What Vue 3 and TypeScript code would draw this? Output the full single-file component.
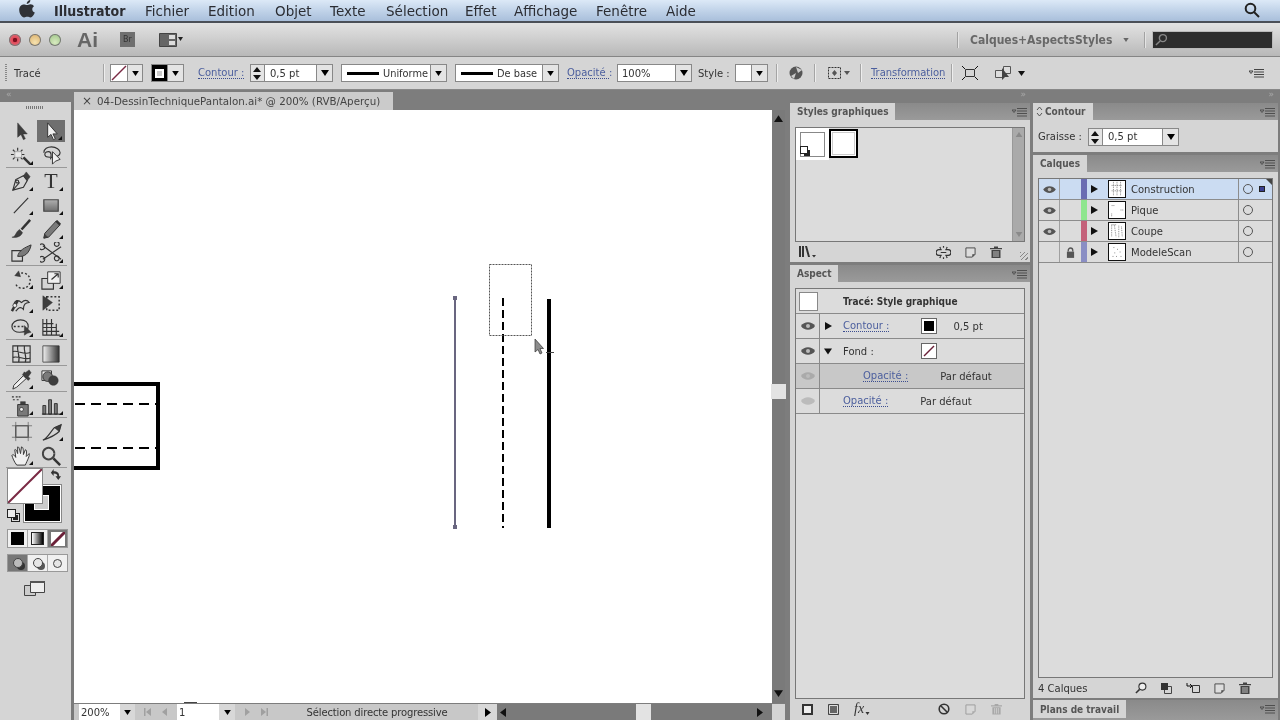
<script setup lang="ts">
interface Shape { d: string; c?: string }
interface Tool { icon: Shape[]; text?: string; flyout?: boolean; active?: boolean }

const menus = [
  { label: 'Fichier', width: 63 },
  { label: 'Edition', width: 67 },
  { label: 'Objet', width: 55 },
  { label: 'Texte', width: 56 },
  { label: 'Sélection', width: 79 },
  { label: 'Effet', width: 49 },
  { label: 'Affichage', width: 82 },
  { label: 'Fenêtre', width: 70 },
  { label: 'Aide', width: 40 },
]

const t = (icon: Shape[], flyout = true, extra: Partial<Tool> = {}): Tool => ({ icon, flyout, ...extra })

const toolGroups: Tool[][] = [
  [
    t([{ d: 'M8 3V18L11.5 15L14 20.5L16 19.5L13.5 14.5H18Z', c: 'dark' }], false),
    t([{ d: 'M8 3V18L11.5 15L14 20.5L16 19.5L13.5 14.5H18Z', c: 'white' }], true, { active: true }),
    t([{ d: 'M14 14L21 21', c: 'thick' }, { d: 'M8 4V7M8 15V18M1 11H4M12 11H15M3 6L5 8M11 14L13 16M13 6L11 8M5 14L3 16', c: 'line' }, { d: 'M5 8H12V14H5Z', c: 'pale' }]),
    t([{ d: 'M4 9C4 5 8 3 12 3C17 3 21 6 21 9C21 12 17 14 13 14C9 14 7 14 6 13C4 11 5 8 9 8C12 8 12 12 11 16', c: 'line' }, { d: 'M13 8V21L16 18L21 16Z', c: 'white' }], false),
  ],
  [
    t([{ d: 'M3 21L6 10L14 6L18 11L14 18Z', c: 'open' }, { d: 'M3 21L10 13', c: 'line' }, { d: 'M14 6L17 2L21 7L18 11Z', c: 'dark' }, { d: 'M9 12A1.5 1.5 0 1 0 9 12.1', c: 'line' }]),
    t([], true, { text: 'T' }),
    t([{ d: 'M4 20L19 4', c: 'line' }]),
    t([{ d: 'M4 6H19V18H4Z', c: 'grad' }]),
    t([{ d: 'M12 12L21 2', c: 'thick' }, { d: 'M2 20C6 20 6 14 10 12L13 15C12 19 7 21 2 20Z', c: 'dark' }], false),
    t([{ d: 'M5 16L17 3L21 7L9 20L4 21Z', c: 'mid' }, { d: 'M17 3L21 7', c: 'thick' }, { d: 'M4 21L5 17L8 20Z', c: 'dark' }]),
    t([{ d: 'M2 9H13V20H2Z', c: 'open' }, { d: 'M8 15C9 9 15 6 22 3C21 9 17 15 11 15Z', c: 'mid' }], false),
    t([{ d: 'M3 4L22 18M3 18L22 5', c: 'line' }, { d: 'M5 5A3 3 0 1 0 5 5.1M5 18A3 3 0 1 0 5 18.1', c: 'line' }, { d: 'M20 2A2.5 2.5 0 1 0 20 2.1M20 17A2.5 2.5 0 1 0 20 17.1', c: 'line' }]),
  ],
  [
    t([{ d: 'M8 7A8 8 0 1 1 6 17', c: 'dots' }, { d: 'M9 3L5 8L11 9Z', c: 'dark' }]),
    t([{ d: 'M2 11H14V22H2Z', c: 'open' }, { d: 'M8 4H21V16H8Z', c: 'wopen' }, { d: 'M12 12L19 6M15 6H19V10', c: 'line' }]),
    t([{ d: 'M4 15C4 8 9 8 12 11C15 8 18 8 20 11C16 11 14 14 14 18C10 14 8 18 6 20', c: 'line' }, { d: 'M8 9L2 20', c: 'thick' }, { d: 'M7 14A2 2 0 1 0 7 14.1', c: 'white' }]),
    t([{ d: 'M7 5H20V19H7Z', c: 'dots' }, { d: 'M3 4L13 11L3 19Z', c: 'dark' }], false),
    t([{ d: 'M2 11C2 7 6 4 11 4C16 4 19 7 19 11C19 15 15 17 10 17C6 17 2 15 2 11Z', c: 'line' }, { d: 'M4 11H15', c: 'dots' }, { d: 'M15 10V20L18 18L22 17Z', c: 'dark' }]),
    t([{ d: 'M3 3V20H21M3 16H20M3 12H17M3 8H14M7 3V20M12 3V20M17 8V20', c: 'line' }]),
  ],
  [
    t([{ d: 'M3 4H21V21H3Z', c: 'open' }, { d: 'M3 10C8 8 14 14 21 11M3 16C9 14 14 19 21 17M8 4C7 10 11 15 9 21M15 4C14 10 18 15 16 21', c: 'line' }], false),
    t([{ d: 'M3 4H20V21H3Z', c: 'hgrad' }], false),
  ],
  [
    t([{ d: 'M3 22L4 18L14 8L17 11L7 20Z', c: 'wopen' }, { d: 'M13 7L19 13L21 11L19 9L22 5L20 2L16 5L15 4Z', c: 'dark' }]),
    t([{ d: 'M2 3H12V13H2Z', c: 'wopen' }, { d: 'M13 9A5 5 0 1 0 13 9.1', c: 'mid' }, { d: 'M19 13A5 5 0 1 0 19 13.1', c: 'dark' }], false),
  ],
  [
    t([{ d: 'M8 11H19V23H8Z', c: 'mid' }, { d: 'M11 8H16V11H11Z', c: 'dark' }, { d: 'M2 3H4M6 3H8M9 3H11M3 6H5M7 6H9', c: 'line' }, { d: 'M14 16A2 2 0 1 0 14 16.1', c: 'wopen' }]),
    t([{ d: 'M3 12H6V21H3ZM9 6H12V21H9ZM15 10H18V21H15Z', c: 'mid' }, { d: 'M2 21H22', c: 'line' }]),
  ],
  [
    t([{ d: 'M6 6H19V18H6Z', c: 'open' }, { d: 'M2 6H23M2 18H23M6 2V22M19 2V22', c: 'hair' }], false),
    t([{ d: 'M3 21C8 19 11 12 15 8L22 5L20 12C16 16 9 19 3 21Z', c: 'open' }, { d: 'M15 8L22 5L20 12Z', c: 'dark' }]),
    t([{ d: 'M7 22C4 18 3 15 2 12C3 10 5 12 6 14L5 6C7 5 7 8 8 10L8 3C10 3 10 7 11 10L12 3C14 3 14 7 14 11L16 6C18 6 17 10 17 13L20 10C21 12 18 17 16 22Z', c: 'wopen' }]),
    t([{ d: 'M15 10A6 6 0 1 0 15 10.1', c: 'circle' }, { d: 'M14 15L21 22', c: 'thick' }], false),
  ],
]

const panelRows = [
  { color: '#6a6cb2', selected: true, eye: true, name: 'Construction', thumb: 'M5 1V17M9 1V17M13 1V17M3 5H15M3 11H15' },
  { color: '#8ee68e', eye: true, name: 'Pique', thumb: 'M3 4H7M3 13V16M13 9H17' },
  { color: '#c4617a', eye: true, name: 'Coupe', thumb: 'M3 2V16M6 2L8 16M11 3V16M14 4L15 16M3 2H9' },
  { color: '#8a8ec4', lock: true, name: 'ModeleScan', thumb: 'M5 4H6M9 6H10M12 9H13M6 10H7M8 14H9M13 14H14M4 14H5' },
]
</script>

<template>
  <div class="app">
    <svg class="defs" width="0" height="0">
      <defs>
        <linearGradient id="gv" x1="0" y1="0" x2="0" y2="1"><stop offset="0" stop-color="#b0b0b0" /><stop offset="1" stop-color="#6e6e6e" /></linearGradient>
        <linearGradient id="gh" x1="0" y1="0" x2="1" y2="0"><stop offset="0" stop-color="#f2f2f2" /><stop offset="1" stop-color="#333" /></linearGradient>
      </defs>
      <symbol id="drop" viewBox="0 0 8 6"><path d="M0 0H8L4 6Z" /></symbol>
      <symbol id="menu" viewBox="0 0 15 10">
        <path class="m" d="M5 1.5H15M5 4H15M5 6.5H15M5 9H15M0 3H4L2 5.5Z" />
      </symbol>
      <symbol id="eye" viewBox="0 0 14 10">
        <path d="M0 5C3 0 11 0 14 5C11 10 3 10 0 5Z" />
        <circle cx="7" cy="5" r="2" fill="#bbb" />
      </symbol>
      <symbol id="page" viewBox="0 0 12 12">
        <path class="icon-open" d="M1 1H11V8L8 11H1Z" />
        <path d="M8 11V8H11Z" />
      </symbol>
      <symbol id="trash" viewBox="0 0 12 12">
        <path d="M0 2H12V3.2H0ZM4 .5H8V2H4ZM1.5 4H10.5V12H1.5Z" />
        <path stroke="#ddd" stroke-width=".8" d="M4 5V11M6 5V11M8 5V11" />
      </symbol>
    </svg>

    <header class="menubar">
      <svg class="apple" viewBox="0 0 16 18" width="16" height="18">
        <path d="M11.4 0C11.5 2.2 9.6 4 7.7 3.9C7.6 1.9 9.500 .1 11.4 0ZM8 5C9 5 10 4.200 11.500 4.200C13 4.200 14.300 5 15 6.200C12.400 7.700 12.800 11.500 15.800 12.600C15 14.800 13.300 17.500 11.500 17.500C10.300 17.500 9.700 16.800 8.300 16.800C6.900 16.800 6.300 17.500 5.100 17.500C2.800 17.500 .2 13.500 .2 10C.2 6.500 2.400 4.400 4.800 4.400C6.100 4.400 7.100 5 8 5Z" />
      </svg>
      <span class="menu-app">Illustrator</span>
      <span v-for="m in menus" :key="m.label" class="menu-item" :style="{ width: m.width + 'px' }">{{ m.label }}</span>
      <svg class="spot" viewBox="0 0 16 16" width="16" height="16">
        <circle cx="6.500" cy="6.500" r="4.800" />
        <path d="M10 10L15 15" />
      </svg>
    </header>

    <section class="appbar">
      <div class="lights">
        <i class="light red"></i><i class="light amber"></i><i class="light green"></i>
      </div>
      <span class="ai">Ai</span>
      <span class="br">Br</span>
      <svg class="arrange" viewBox="0 0 24 14" width="24" height="14">
        <path fill="#666" stroke="#444" d="M.5 .5H17.500V13.500H.5Z" />
        <path fill="#ddd" d="M10 2H16V6H10ZM10 8H16V12H10Z" />
        <path fill="#222" d="M19 4H24L21.500 8Z" />
      </svg>
      <div class="spacer"></div>
      <i class="vsep"></i>
      <span class="workspace">Calques+AspectsStyles</span>
      <svg class="ws-caret" width="6" height="4"><use href="#drop" fill="#666" /></svg>
      <i class="vsep"></i>
      <div class="search">
        <svg viewBox="0 0 14 14" width="13" height="13">
          <circle cx="8.500" cy="5.500" r="3.800" />
          <path d="M5.500 8.500L1 13" />
        </svg>
      </div>
    </section>

    <section class="controlbar">
      <i class="grip"></i>
      <span class="ctl-title">Tracé</span>
      <i class="ctl-sep first"></i>
      <div class="combo swatch-combo">
        <span class="sw"><svg viewBox="0 0 16 16" width="16" height="16"><path class="none-line" d="M1 15L15 1" /></svg></span>
        <span class="dd"><svg width="7" height="5"><use href="#drop" /></svg></span>
      </div>
      <div class="combo swatch-combo">
        <span class="sw black"><i></i></span>
        <span class="dd"><svg width="7" height="5"><use href="#drop" /></svg></span>
      </div>
      <span class="link contour">Contour :</span>
      <div class="combo weight">
        <span class="spin"><svg viewBox="0 0 12 17" width="12" height="17"><path d="M2 7L6 2L10 7ZM2 10H10L6 15Z" /></svg></span>
        <span class="val">0,5 pt</span>
        <span class="dd"><svg width="8" height="6"><use href="#drop" /></svg></span>
      </div>
      <div class="combo profile w106">
        <i class="stroke-sample"></i><span class="val">Uniforme</span>
        <span class="dd"><svg width="7" height="5"><use href="#drop" /></svg></span>
      </div>
      <div class="combo profile w104">
        <i class="stroke-sample"></i><span class="val">De base</span>
        <span class="dd"><svg width="7" height="5"><use href="#drop" /></svg></span>
      </div>
      <span class="link opacity">Opacité :</span>
      <div class="combo percent">
        <span class="val">100%</span>
        <span class="dd"><svg width="8" height="6"><use href="#drop" /></svg></span>
      </div>
      <span class="style-label">Style :</span>
      <div class="combo swatch-combo style-swatch">
        <span class="sw"></span>
        <span class="dd"><svg width="7" height="5"><use href="#drop" /></svg></span>
      </div>
      <i class="ctl-sep"></i>
      <svg class="globe" viewBox="0 0 14 14" width="14" height="14">
        <circle cx="7" cy="7" r="6.500" fill="#555" />
        <path fill="#ccc" d="M7 1L9 7L13 4ZM2 10L7 7L5 13Z" />
      </svg>
      <i class="ctl-sep"></i>
      <svg class="align" viewBox="0 0 24 14" width="24" height="14">
        <path fill="none" stroke="#333" stroke-dasharray="2 1" d="M1.500 1.500H13.500V12.500H1.500Z" />
        <path fill="#555" d="M5 7L7.500 4L10 7L7.500 10ZM17 5H23L20 9Z" />
      </svg>
      <i class="ctl-sep"></i>
      <span class="link transform">Transformation</span>
      <i class="ctl-sep"></i>
      <svg class="isolate" viewBox="0 0 16 14" width="16" height="14">
        <path fill="none" stroke="#333" d="M3.500 3.500H12.500V10.500H3.500Z" />
        <path fill="none" stroke="#111" d="M0 0L3 3M16 0L13 3M0 14L3 11M16 14L13 11" />
      </svg>
      <svg class="arrange-ic" viewBox="0 0 30 14" width="30" height="14">
        <path fill="#ddd" stroke="#555" d="M.5 4.500H7.500V11.500H.5ZM8.500 .5H15.500V7.500H8.500Z" />
        <path fill="#444" d="M7 2V14L10 11L14 11Z" />
        <path fill="#111" d="M23 5H30L26.500 10Z" />
      </svg>
      <div class="spacer"></div>
      <svg class="ctl-menu" width="15" height="10"><use href="#menu" /></svg>
    </section>

    <main class="workspace-area">
      <aside class="toolbox">
        <div class="strip"><span class="chev">«</span></div>
        <i class="tool-grip"></i>
        <div v-for="(group, gi) in toolGroups" :key="gi" class="tool-group">
          <div v-for="(tool, ti) in group" :key="ti" class="tool" :class="{ active: tool.active, fly: tool.flyout }">
            <span v-if="tool.text" class="tool-text">{{ tool.text }}</span>
            <svg v-else viewBox="0 0 24 24" width="23" height="23">
              <path v-for="(s, si) in tool.icon" :key="si" :d="s.d" :class="s.c" />
            </svg>
          </div>
        </div>

        <div class="fillstroke">
          <svg class="swap" viewBox="0 0 14 14" width="13" height="13">
            <path d="M2 5L5 1V3.500C9 3.500 11 5 11 9H13L10 13L7 9H9C9 7 8 6 5 6V8.500Z" />
          </svg>
          <div class="stroke-box"><i></i></div>
          <div class="fill-box">
            <svg viewBox="0 0 34 34" width="34" height="34"><path d="M0 34L34 0" /></svg>
          </div>
          <div class="defaults"><i></i><i></i></div>
        </div>

        <div class="mode-row">
          <span class="cell"><i class="solid"></i></span>
          <span class="cell"><i class="gradient"></i></span>
          <span class="cell on"><svg viewBox="0 0 14 14" width="14" height="14"><path fill="#fff" d="M0 0H14V14H0Z" /><path stroke="#6b2038" stroke-width="3" d="M0 14L14 0" /></svg></span>
        </div>
        <div class="mode-row draw">
          <span class="cell on"><i class="dm one"></i></span>
          <span class="cell"><i class="dm two"></i></span>
          <span class="cell"><i class="dm three"></i></span>
        </div>
        <svg class="screen" viewBox="0 0 22 17" width="22" height="17">
          <path fill="#ccc" stroke="#444" d="M.5 5.500H11.500V15.500H.5Z" />
          <path fill="#eee" stroke="#444" d="M6.500 1.500H20.500V12.500H6.500Z" />
          <path fill="#555" d="M6 1H21V3H6Z" />
        </svg>
      </aside>

      <section class="document">
        <div class="tabrow">
          <div class="tab"><span class="tab-x">×</span>04-DessinTechniquePantalon.ai* @ 200% (RVB/Aperçu)</div>
        </div>
        <div class="doc-main">
          <div class="canvas">
            <svg class="art" viewBox="74 110 698 593" width="698" height="593">
              <path class="art-rect" d="M60 384H158V468H60" />
              <path class="art-dash1" d="M75 404H158M75 448H158" />
              <path class="art-purple" d="M455 298V528" />
              <path class="art-node" d="M453 296H457V300H453ZM453 525H457V529H453Z" />
              <path class="art-dash2" d="M503 298V528" />
              <path class="art-thick" d="M549 299V528" />
              <path class="art-dot" d="M489.500 264.500H531.500V335.500H489.500Z" />
              <path class="art-tick" d="M546 352.500H554" />
              <path class="art-cursor" d="M535 339V352L538 349.500L540 354L542 353L540 348.500H543.500Z" />
              <path class="art-tick" d="M184 702.500H197" />
            </svg>
          </div>
          <div class="vscroll">
            <svg class="sb-up" width="9" height="7" viewBox="0 0 8 6"><path d="M0 6H8L4 0Z" /></svg>
            <i class="v-thumb"></i>
            <svg class="sb-down" width="9" height="7"><use href="#drop" /></svg>
          </div>
        </div>
        <footer class="status">
          <div class="st-field zoom"><span>200%</span></div>
          <span class="st-dd"><svg width="7" height="5"><use href="#drop" /></svg></span>
          <svg class="st-nav nav-a" viewBox="0 0 26 10" width="26" height="10"><path d="M1 1H2.500V9H1ZM8 1L3 5L8 9ZM24 1L19 5L24 9Z" /></svg>
          <div class="st-field page"><span>1</span></div>
          <span class="st-dd"><svg width="7" height="5"><use href="#drop" /></svg></span>
          <svg class="st-nav" viewBox="0 0 26 10" width="26" height="10"><path d="M2 1L7 5L2 9ZM18 1L23 5L18 9ZM23.500 1H25V9H23.500Z" /></svg>
          <span class="st-text">Sélection directe progressive</span>
          <span class="st-play"><svg width="6" height="9" viewBox="0 0 6 9"><path d="M0 0L6 4.500L0 9Z" /></svg></span>
          <div class="hscroll">
            <svg width="6" height="9" viewBox="0 0 6 9"><path d="M6 0L0 4.500L6 9Z" /></svg>
            <i class="h-thumb"></i>
            <svg width="6" height="9" viewBox="0 0 6 9"><path d="M0 0L6 4.500L0 9Z" /></svg>
          </div>
          <i class="corner"></i>
        </footer>
      </section>

      <section class="dock dock-mid">
        <div class="strip"><span class="chev right">»</span></div>
        <div class="panel styles">
          <div class="panel-head">
            <span class="panel-tab w105">Styles graphiques</span>
            <svg class="p-menu" width="15" height="10"><use href="#menu" /></svg>
          </div>
          <div class="styles-box">
            <div class="style-thumbs">
              <div class="thumb-a"><i></i><b></b></div>
              <div class="thumb-b"><i></i></div>
            </div>
            <div class="styles-sb">
              <svg width="8" height="5" viewBox="0 0 8 6"><path d="M0 6H8L4 0Z" /></svg>
              <svg width="8" height="5"><use href="#drop" /></svg>
            </div>
          </div>
          <div class="panel-foot">
            <svg class="lib" viewBox="0 0 18 12" width="18" height="12">
              <path fill="#333" d="M0 0H2V11H0ZM3 0H5V11H3ZM6 0L8 0L11 11H9ZM13 9H17L15 11.500Z" />
            </svg>
            <div class="spacer"></div>
            <svg class="foot-ic" viewBox="0 0 16 14" width="15" height="13">
              <path fill="none" stroke="#333" stroke-width="1.300" d="M6 4H3A3 3 0 0 0 3 10H6M10 4H13A3 3 0 0 1 13 10H10M5 7H11M8 0V2M8 12V14M4 1L5 3M12 1L11 3M4 13L5 11M12 13L11 11" />
            </svg>
            <svg class="foot-ic" width="11" height="11"><use href="#page" /></svg>
            <svg class="foot-ic trash" width="12" height="12"><use href="#trash" /></svg>
            <i class="resize"></i>
          </div>
        </div>
        <i class="dock-gap"></i>
        <div class="panel aspect">
          <div class="panel-head">
            <span class="panel-tab w48">Aspect</span>
            <svg class="p-menu" width="15" height="10"><use href="#menu" /></svg>
          </div>
          <div class="aspect-box">
            <div class="a-row head">
              <span class="a-thumb"><i></i></span>
              <strong>Tracé: Style graphique</strong>
            </div>
            <div class="a-row">
              <span class="a-eye"><svg width="14" height="10" fill="#555"><use href="#eye" /></svg></span>
              <span class="a-tw"><svg width="7" height="8" viewBox="0 0 7 8"><path d="M0 0L7 4L0 8Z" /></svg></span>
              <span class="link a-name">Contour :</span>
              <span class="a-sw"><i class="black"></i></span>
              <span class="a-val">0,5 pt</span>
            </div>
            <div class="a-row">
              <span class="a-eye"><svg width="14" height="10" fill="#555"><use href="#eye" /></svg></span>
              <span class="a-tw"><svg width="8" height="7"><use href="#drop" /></svg></span>
              <span class="a-name">Fond :</span>
              <span class="a-sw"><svg viewBox="0 0 12 12" width="12" height="12"><path stroke="#6b2038" stroke-width="1.500" d="M1 11L11 1" /></svg></span>
            </div>
            <div class="a-row dim sub">
              <span class="a-eye"><svg width="14" height="10" fill="#aaa"><use href="#eye" /></svg></span>
              <span class="link sub-name">Opacité :</span>
              <span class="a-def sub-def">Par défaut</span>
            </div>
            <div class="a-row">
              <span class="a-eye"><svg width="14" height="10" fill="#bbb"><use href="#eye" /></svg></span>
              <span class="link a-name2">Opacité :</span>
              <span class="a-def">Par défaut</span>
            </div>
          </div>
          <div class="aspect-foot">
            <svg width="11" height="11" viewBox="0 0 11 11"><path fill="#eee" stroke="#333" stroke-width="2" d="M1 1H10V10H1Z" /></svg>
            <svg class="gap-22" width="11" height="11" viewBox="0 0 11 11"><path fill="#666" stroke="#444" d="M.5 .5H10.500V10.500H.5Z" /><path fill="none" stroke="#ddd" d="M1.500 1.500H9.500V9.500H1.500Z" /></svg>
            <span class="fx">fx</span>
            <svg class="caret" width="5" height="3"><use href="#drop" /></svg>
            <div class="spacer"></div>
            <svg class="no" viewBox="0 0 12 12" width="12" height="12"><circle cx="6" cy="6" r="4.800" fill="none" stroke="#333" stroke-width="1.600" /><path stroke="#333" stroke-width="1.600" d="M2.500 2.500L9.500 9.500" /></svg>
            <svg class="ghost" width="11" height="11"><use href="#page" /></svg>
            <svg class="ghost" width="11" height="12"><use href="#trash" /></svg>
          </div>
        </div>
      </section>

      <section class="dock dock-right">
        <div class="strip"><span class="chev right">»</span></div>
        <div class="panel contour-panel">
          <div class="panel-head">
            <span class="panel-tab w60"><svg width="7" height="11" viewBox="0 0 7 11"><path fill="none" stroke="#555" d="M1 4L3.500 1L6 4M1 7L3.500 10L6 7" /></svg>Contour</span>
            <svg class="p-menu" width="15" height="10"><use href="#menu" /></svg>
          </div>
          <div class="contour-body">
            <span class="graisse">Graisse :</span>
            <div class="combo weight small">
              <span class="spin"><svg viewBox="0 0 12 17" width="12" height="17"><path d="M2 7L6 2L10 7ZM2 10H10L6 15Z" /></svg></span>
              <span class="val">0,5 pt</span>
              <span class="dd"><svg width="8" height="6"><use href="#drop" /></svg></span>
            </div>
          </div>
        </div>
        <i class="dock-gap"></i>
        <div class="panel layers">
          <div class="panel-head">
            <span class="panel-tab w54">Calques</span>
            <svg class="p-menu" width="15" height="10"><use href="#menu" /></svg>
          </div>
          <div class="layer-box">
            <div v-for="r in panelRows" :key="r.name" class="layer" :class="{ selected: r.selected }">
              <span class="l-eye"><svg v-if="r.eye" width="13" height="9" fill="#555"><use href="#eye" /></svg></span>
              <span class="l-lock">
                <svg v-if="r.lock" viewBox="0 0 10 12" width="9" height="11"><path fill="none" stroke="#555" stroke-width="1.500" d="M2.500 5V3.500A2.500 2.500 0 0 1 7.500 3.500V5" /><path fill="#555" d="M1 5H9V12H1Z" /></svg>
              </span>
              <i class="l-color" :style="{ background: r.color }"></i>
              <span class="l-tw"><svg width="7" height="8" viewBox="0 0 7 8"><path d="M0 0L7 4L0 8Z" /></svg></span>
              <span class="l-thumb"><svg viewBox="0 0 18 18" width="16" height="16"><path :d="r.thumb" /></svg></span>
              <span class="l-name">{{ r.name }}</span>
              <span class="l-target"><i class="ring"></i><i v-if="r.selected" class="sel-sq"></i></span>
            </div>
          </div>
          <div class="layer-foot">
            <span class="layer-count">4 Calques</span>
            <div class="spacer"></div>
            <svg viewBox="0 0 13 13" width="12" height="12" class="lf"><circle cx="8" cy="5" r="3.800" fill="#eee" stroke="#333" stroke-width="1.200" /><path stroke="#333" stroke-width="1.600" d="M5 8L1 12" /></svg>
            <svg viewBox="0 0 11 11" width="11" height="11" class="lf"><path fill="none" stroke="#444" d="M3.500 3.500H10.500V10.500H3.500Z" /><path fill="#333" d="M0 0H7V7H0Z" /></svg>
            <svg viewBox="0 0 14 10" width="14" height="10" class="lf"><path fill="none" stroke="#333" d="M6.500 2.500H13.500V9.500H6.500Z" /><path fill="none" stroke="#111" d="M1 0V3H6M4 1L6 3L4 5" /></svg>
            <svg width="11" height="11" class="lf"><use href="#page" /></svg>
            <svg width="12" height="12" class="lf"><use href="#trash" /></svg>
          </div>
        </div>
        <div class="artboards">
          <span class="panel-tab plans">Plans de travail</span>
          <svg class="p-menu" width="15" height="10"><use href="#menu" /></svg>
        </div>
      </section>
    </main>
  </div>
</template>

<style>
html, body { margin: 0; overflow: hidden; background: #7d7d7d; }
</style>

<style scoped>
.app {
  width: 1280px; height: 720px; display: flex; flex-direction: column; overflow: hidden;
  font-family: "DejaVu Sans", sans-serif; font-size: 10px; color: #333; background: #7d7d7d;
  filter: blur(.3px);
}
.defs { position: absolute; }
.spacer { flex: 1; }
i { display: block; }
svg { display: block; flex: none; }
.icon-open { fill: #ddd; stroke: #444; }

/* Menu bar */
.menubar {
  height: 21px; flex: none; display: flex; align-items: center; position: relative;
  background: linear-gradient(#dce9f7, #bccfe6 60%, #a9bfdb); border-bottom: 2px solid #4a4f57;
  font-size: 14px; color: #2b2d33;
}
.apple { margin-left: 19px; fill: #2f3136; margin-top: -3px; }
.menu-app { margin-left: 19px; width: 91px; font-weight: 700; font-size: 14px; font-family: "DejaVu Sans Condensed", "DejaVu Sans", sans-serif; font-stretch: condensed; }
.menu-item { font-size: 13.500px; flex: none; white-space: nowrap; }
.spot { position: absolute; right: 20px; top: 2px; fill: none; stroke: #222; stroke-width: 2; }

/* Application bar */
.appbar {
  height: 33px; flex: none; display: flex; align-items: center;
  background: linear-gradient(#e2e2e2, #d2d2d2 40%, #b8b8b8); border-bottom: 1px solid #858585;
}
.lights { display: flex; gap: 8px; margin-left: 9px; }
.light { width: 12px; height: 12px; border-radius: 50%; box-shadow: inset 0 0 0 1px #777; }
.red { background: radial-gradient(circle, #7a1020 22%, #e04a5a 30%, #e8808a); }
.amber { background: radial-gradient(circle at 50% 70%, #f5e2b0, #d8a860); }
.green { background: radial-gradient(circle at 50% 70%, #d8eac0, #96c080); }
.ai { margin-left: 16px; font-family: "Liberation Sans", sans-serif; font-size: 21px; font-weight: 700; color: #666; width: 34px; }
.br {
  width: 15px; height: 15px; background: #6f6f6f; color: #333; font-size: 8px; text-align: center; line-height: 16px;
  margin-left: 9px;
}
.arrange { margin-left: 24px; }
.vsep { width: 1px; height: 16px; background: #a2a2a2; box-shadow: 1px 0 0 #e4e4e4; }
.workspace { margin-left: 12px; font-size: 12px; font-weight: 700; color: #686868; width: 153px; white-space: nowrap; font-family: "DejaVu Sans Condensed", "DejaVu Sans", sans-serif; font-stretch: condensed; }
.ws-caret { margin-right: 15px; }
.search {
  width: 119px; height: 16px; margin: 0 8px 0 8px; background: #2e2e2e; display: flex; align-items: center;
  box-shadow: 0 0 0 1px #bbb;
}
.search svg { margin-left: 2px; fill: none; stroke: #888; stroke-width: 1.500; }

/* Control bar */
.controlbar {
  height: 33px; flex: none; display: flex; align-items: center; background: #d5d5d5; border-bottom: 1px solid #888;
  position: relative; box-sizing: border-box; font-size: 10px;
}
.grip { width: 2px; height: 18px; margin-left: 5px; background: repeating-linear-gradient(#888 0 1px, transparent 1px 2px); }
.ctl-title { margin-left: 7px; width: 89px; }
.ctl-sep { width: 1px; height: 18px; background: #a5a5a5; box-shadow: 1px 0 0 #eee; flex: none; }
.ctl-sep.first { margin-right: 6px; }
.combo { display: flex; height: 18px; background: #fff; box-sizing: border-box; border: 1px solid #888; align-items: center; flex: none; }
.combo .dd { align-self: stretch; display: flex; align-items: center; justify-content: center; background: #e4e4e4; border-left: 1px solid #888; }
.combo .val { flex: 1; font-size: 10px; color: #333; white-space: nowrap; }
.swatch-combo { width: 33px; margin-right: 8px; }
.swatch-combo .sw { flex: 1; height: 16px; }
.swatch-combo .dd { width: 15px; }
.sw.black { background: #000; display: flex; align-items: center; justify-content: center; }
.sw.black i { width: 5px; height: 5px; border: 2px solid #fff; background: #ccc; }
.none-line { stroke: #7a2a44; stroke-width: 1.500; }
.link { color: #4c5f9e; border-bottom: 1px dotted #3b4d90; line-height: 11px; flex: none; }
.contour { margin-left: 6px; width: 46px; white-space: nowrap; margin-right: 6px; }
.weight { width: 83px; margin-right: 8px; }
.spin { width: 13px; align-self: stretch; background: #e4e4e4; border-right: 1px solid #888; margin-right: 5px; }
.spin path { fill: #111; }
.weight .dd { width: 15px; }
.profile { padding-left: 5px; margin-right: 8px; }
.w106 { width: 106px; }
.w104 { width: 104px; }
.stroke-sample { width: 32px; height: 3px; background: #000; margin-right: 4px; }
.profile .val { font-size: 9.800px; }
.profile .dd { width: 15px; flex: none; }
.opacity { width: 42px; white-space: nowrap; }
.percent { width: 75px; margin-left: 8px; padding-left: 4px; }
.percent .dd { width: 15px; }
.style-label { margin-left: 6px; width: 37px; }
.style-swatch { margin-right: 8px; }
.globe { margin: 0 11px 0 12px; }
.align { margin: 0 9px 0 12px; }
.transform { margin: 0 6px 0 10px; white-space: nowrap; letter-spacing: -.05px; }
.isolate { margin-left: 10px; }
.arrange-ic { margin-left: 17px; }
.ctl-menu { margin-right: 16px; }
.m { stroke: #444; fill: none; }

/* Work area */
.workspace-area { flex: 1; display: flex; min-height: 0; }
.strip { height: 13px; background: #7d7d7d; flex: none; position: relative; }
.chev { position: absolute; left: 6px; top: -1px; font-size: 9px; color: #aaa; }
.chev.right { left: auto; right: 4px; }

/* Toolbox */
.toolbox {
  width: 71px; flex: none; background: #d5d5d5; border-right: 3px solid #7a7a7a; position: relative;
  display: flex; flex-direction: column; align-items: stretch;
}
.toolbox .strip { height: 12px; margin-right: -3px; }
.tool-grip { height: 3px; width: 18px; margin: 4px auto 10px 26px; background: repeating-linear-gradient(90deg, #777 0 1px, transparent 1px 2px); }
.tool-group {
  display: grid; grid-template-columns: 30px 30px; grid-auto-rows: 24px; margin: 0 4px 1px 6px;
  border-bottom: 1px solid #999;
}
.tool { display: flex; align-items: center; justify-content: center; position: relative; }
.tool.active { background: #6f6f6f; margin: 1px; }
.tool.fly::after {
  content: ""; position: absolute; right: 3px; bottom: 2px; border: 2px solid transparent; border-right-color: #111; border-bottom-color: #111;
}
.tool-text { font-family: "Liberation Serif", serif; font-size: 22px; line-height: 24px; color: #333; }
.tool svg path { fill: none; stroke: #333; stroke-width: 1.200; }
.tool svg path.dark { fill: #3e3e3e; stroke: #333; stroke-width: .5; }
.tool svg path.white { fill: #f2f2f2; stroke: #333; stroke-width: 1; }
.tool svg path.pale { fill: #e8e8e8; stroke: #999; stroke-width: .8; }
.tool svg path.thick { stroke: #333; stroke-width: 2.600; }
.tool svg path.mid { fill: #7a7a7a; stroke: #333; stroke-width: 1; }
.tool svg path.wopen { fill: #f0f0f0; stroke: #333; stroke-width: 1; }
.tool svg path.grad { fill: url(#gv); stroke: #444; stroke-width: 1.300; }
.tool svg path.hgrad { fill: url(#gh); stroke: #333; stroke-width: .8; }
.tool svg path.dots { stroke: #333; stroke-width: 1.500; stroke-dasharray: 2 2; }
.tool svg path.hair { stroke: #666; stroke-width: .8; }
.tool svg path.circle { fill: #d8d8d8; stroke: #444; stroke-width: 2; }

.fillstroke { height: 57px; position: relative; margin-top: -1px; flex: none; }
.fill-box { position: absolute; left: 7px; top: 0; width: 34px; height: 34px; background: #fff; border: 1px solid #888; }
.fill-box path { stroke: #7a2a44; stroke-width: 2; }
.stroke-box {
  position: absolute; left: 25px; top: 18px; width: 25px; height: 25px; border: 5px solid #000; box-shadow: 0 0 0 1px #fff, 0 0 0 2px #888;
  background: #000;
}
.stroke-box i { width: 15px; height: 15px; background: #ccc; border: 1px solid #fff; margin: 4px; box-sizing: border-box; }
.swap { position: absolute; left: 49px; top: 0; fill: #333; }
.defaults { position: absolute; left: 7px; top: 41px; width: 12px; height: 12px; }
.defaults i { position: absolute; width: 7px; height: 7px; border: 1px solid #222; }
.defaults i:first-child { left: 4px; top: 4px; background: #222; box-shadow: inset 0 0 0 1px #ddd; }
.defaults i:last-child { left: 0; top: 0; background: #eee; }
.mode-row { height: 17px; display: flex; margin: 4px 3px 0 7px; border: 1px solid #999; background: #f0f0f0; flex: none; }
.mode-row .cell { flex: 1; display: flex; align-items: center; justify-content: center; border-left: 1px solid #aaa; }
.mode-row .cell:first-child { border-left: 0; }
.mode-row .cell.on { background: #777; }
.solid { width: 13px; height: 13px; background: #000; }
.gradient { width: 13px; height: 13px; background: linear-gradient(90deg, #fff, #000); border: 1px solid #222; box-sizing: border-box; }
.mode-row.draw { margin-top: 6px; height: 16px; }
.dm { width: 8px; height: 8px; border-radius: 50%; border: 1px solid #444; background: #e6e6e6; }
.dm.one { background: #bbb; box-shadow: 3px 3px 0 -1px #333; }
.dm.two { box-shadow: 3px 3px 0 -1px #555; }
.dm.three { width: 7px; height: 7px; }
.screen { margin: 8px 0 0 24px; }

/* Document */
.document { width: 716px; flex: none; display: flex; flex-direction: column; background: #7d7d7d; }
.tabrow { height: 20px; flex: none; display: flex; align-items: flex-end; }
.tab {
  width: 319px; height: 18px; background: #cbcbcb; display: flex; align-items: center; font-size: 10.300px; color: #444; white-space: nowrap; box-sizing: border-box;
  padding-left: 8px;
}
.tab-x { margin-right: 5px; font-size: 12px; }
.doc-main { flex: 1; display: flex; min-height: 0; }
.canvas { width: 698px; background: #fff; position: relative; overflow: hidden; flex: none; }
.art { display: block; }
.art path { fill: none; }
.art .art-rect { stroke: #000; stroke-width: 4; }
.art .art-dash1 { stroke: #000; stroke-width: 2; stroke-dasharray: 10 6; }
.art .art-purple { stroke: #696680; stroke-width: 2; }
.art .art-node { fill: #696680; }
.art .art-dash2 { stroke: #000; stroke-width: 2; stroke-dasharray: 8 4; }
.art .art-thick { stroke: #000; stroke-width: 4; }
.art .art-dot { stroke: #555; stroke-width: 1; stroke-dasharray: 2 1; }
.art .art-tick { stroke: #444; stroke-width: 1; }
.art .art-cursor { fill: #8c8c8c; stroke: #333; stroke-width: .7; }
.vscroll { width: 13px; background: #7a7a7a; display: flex; flex-direction: column; align-items: center; position: relative; flex: none; }
.vscroll svg { fill: #111; }
.sb-up { margin-top: 5px; }
.v-thumb { width: 15px; height: 15px; background: #e3e3e3; margin-top: 262px; }
.sb-down { margin-top: auto; margin-bottom: 6px; }
.status {
  height: 17px; flex: none; display: flex; align-items: center; background: #c8c8c8; border-top: 1px solid #7d7d7d; box-sizing: border-box;
  padding-left: 5px; border-right: 5px solid #7d7d7d; font-size: 10px; color: #333;
}
.st-field { background: #fff; height: 100%; display: flex; align-items: center; padding-left: 2px; box-sizing: border-box; }
.zoom { width: 41px; }
.page { width: 42px; }
.st-dd { width: 15px; height: 100%; display: flex; align-items: center; justify-content: center; background: #d8d8d8; }
.page + .st-dd { width: 16px; }
.st-nav { fill: #a0a0a0; margin: 0 7px 0 8px; width: 26px; }
.nav-a { margin-right: 8px; }
.st-text { width: 202px; text-align: center; white-space: nowrap; letter-spacing: -.15px; }
.st-play { width: 19px; height: 100%; display: flex; align-items: center; justify-content: center; background: #d8d8d8; }
.hscroll { width: 275px; height: 100%; background: #7a7a7a; display: flex; align-items: center; justify-content: space-between; padding: 0 9px 0 3px; box-sizing: border-box; position: relative; }
.hscroll svg { fill: #111; }
.h-thumb { position: absolute; left: 139px; top: 0; width: 15px; height: 100%; background: #e3e3e3; }
.corner { width: 13px; height: 100%; background: #d4d4d4; flex: none; }

/* Dock */
.dock { display: flex; flex-direction: column; flex: none; background: #7d7d7d; box-sizing: border-box; }
.dock-mid { width: 243px; padding-right: 3px; }
.dock-right { width: 247px; padding-right: 2px; }
.dock-gap { height: 3px; flex: none; background: #7d7d7d; }
.panel { background: #d5d5d5; display: flex; flex-direction: column; flex: none; }
.panel-head { height: 17px; background: linear-gradient(#8a8a8a, #9a9a9a); display: flex; align-items: stretch; position: relative; flex: none; }
.panel-tab {
  background: #d5d5d5; font-family: "DejaVu Sans Condensed", "DejaVu Sans", sans-serif; font-stretch: condensed;
  font-size: 10px; font-weight: 700; color: #555; padding-left: 7px; display: flex; align-items: center; white-space: nowrap;
  box-sizing: border-box;
}
.w105 { width: 105px; }
.w48 { width: 48px; }
.w60 { width: 60px; gap: 2px; padding-left: 3px; }
.w54 { width: 54px; }
.p-menu { position: absolute; right: 3px; top: 4px; opacity: .85; }
.styles { height: 159px; }
.styles-box { margin: 7px 5px 0; height: 115px; border: 1px solid #777; box-sizing: border-box; background: #dcdcdc; display: flex; flex: none; }
.style-thumbs { flex: 1; display: flex; align-items: flex-start; }
.thumb-a { width: 33px; height: 32px; background: #fff; position: relative; }
.thumb-a i { position: absolute; left: 4px; top: 4px; width: 23px; height: 23px; border: 1px solid #888; }
.thumb-a b { position: absolute; left: 4px; top: 18px; width: 6px; height: 6px; background: #fff; border: 1px solid #222; box-shadow: 3px 3px 0 -1px #222; }
.thumb-b { width: 29px; height: 29px; border: 2px solid #000; background: #fff; display: flex; align-items: center; justify-content: center; margin-top: 1px; box-sizing: border-box; }
.thumb-b i { width: 23px; height: 23px; border: 1px solid #ccc; box-sizing: border-box; }
.styles-sb { width: 12px; background: #aaa; display: flex; flex-direction: column; justify-content: space-between; align-items: center; padding: 4px 0; box-sizing: border-box; fill: #8a8a8a; border-left: 1px solid #999; }
.panel-foot { flex: 1; display: flex; align-items: center; padding: 0 7px 0 9px; position: relative; }
.foot-ic { margin-right: 14px; fill: #444; }
.foot-ic.trash { margin-right: 21px; }
.resize { position: absolute; right: 2px; bottom: 2px; width: 8px; height: 8px; background: repeating-linear-gradient(135deg, #888 0 1px, transparent 1px 3px); }
.aspect { flex: 1; min-height: 0; }
.aspect-box { margin: 6px 5px 0; height: 411px; border: 1px solid #777; box-sizing: border-box; background: #dcdcdc; flex: none; }
.a-row { height: 25px; border-bottom: 1px solid #8a8a8a; box-sizing: border-box; display: flex; align-items: center; font-size: 10px; color: #333; position: relative; }
.a-row.dim { background: #c8c8c8; }
.a-row.head strong { margin-left: 25px; font-size: 10px; color: #333; font-family: "DejaVu Sans Condensed", "DejaVu Sans", sans-serif; font-stretch: condensed; }
.a-thumb { width: 19px; height: 19px; margin-left: 3px; background: #fff; border: 1px solid #888; box-sizing: border-box; }
.a-eye { width: 24px; height: 100%; display: flex; align-items: center; justify-content: center; border-right: 1px solid #8a8a8a; box-sizing: border-box; }
.a-tw { width: 18px; display: flex; justify-content: center; margin-left: -1px; margin-right: 6px; }
.a-tw svg { fill: #111; }
.a-name { width: 78px; flex: none; white-space: nowrap; }
.link.a-name { width: auto; margin-right: 32px; }
.a-sw { width: 14px; height: 14px; background: #fff; border: 1px solid #666; box-sizing: content-box; margin-right: 15px; display: flex; align-items: center; justify-content: center; flex: none; }
.a-sw i.black { width: 10px; height: 10px; background: #000; }
.a-val { margin-left: 1px; }
.sub-name { margin-left: 43px; margin-right: 32px; }
.a-name2 { margin-left: 23px; margin-right: 32px; }
.aspect-foot { display: flex; align-items: center; height: 20px; padding: 0 28px 0 12px; }
.gap-22 { margin-left: 15px; }
.fx { margin-left: 15px; font-family: "Liberation Serif", serif; font-style: italic; font-size: 14px; color: #333; }
.caret { margin-left: 1px; margin-top: 8px; fill: #333; }
.no { margin-right: 15px; }
.ghost { margin-right: 15px; opacity: .4; fill: #666; }
.aspect-foot .ghost:last-child { margin-right: 0; }
.contour-panel { height: 49px; }
.contour-body { flex: 1; display: flex; align-items: center; padding: 1px 0 0 5px; }
.graisse { width: 50px; font-size: 10px; }
.small { width: 91px; margin: 0; }
.small .dd { width: 15px; }
.layers { height: 543px; flex: none; }
.layer-box { margin: 6px 5px 0; height: 500px; border: 1px solid #777; box-sizing: border-box; background: #dcdcdc; flex: none; position: relative; }
.layer-box::after { content: ""; position: absolute; right: 0; top: 0; border: 3px solid transparent; border-top-color: #444; border-right-color: #444; }
.layer { height: 21px; border-bottom: 1px solid #8c8c8c; box-sizing: border-box; display: flex; align-items: center; font-size: 10px; position: relative; }
.layer.selected { background: #cbdcf2; }
.l-eye { width: 21px; height: 100%; display: flex; align-items: center; justify-content: center; border-right: 1px solid #a0a0a0; box-sizing: border-box; }
.l-lock { width: 21px; display: flex; justify-content: center; }
.l-color { width: 6px; height: 100%; flex: none; }
.l-tw { width: 21px; padding-right: 6px; box-sizing: border-box; display: flex; justify-content: center; }
.l-tw svg { fill: #111; }
.l-thumb { width: 18px; height: 18px; background: #fff; border: 1px solid #111; box-sizing: border-box; display: flex; align-items: center; justify-content: center; }
.l-thumb path { stroke: #777; stroke-width: 1; stroke-dasharray: 1 1; fill: none; }
.l-name { margin-left: 5px; width: 107px; color: #333; }
.l-target { flex: 1; height: 100%; display: flex; align-items: center; padding-left: 4px; gap: 6px; border-left: 1px solid #8c8c8c; }
.ring { width: 8px; height: 8px; border-radius: 50%; border: 1px solid #555; background: transparent; }
.sel-sq { width: 4px; height: 4px; background: #3a3f92; border: 1px solid #222; }
.layer-foot { display: flex; align-items: center; flex: 1; padding: 0 27px 0 5px; }
.layer-count { font-size: 10px; color: #333; }
.lf { margin-left: 14px; fill: #444; }
.artboards { height: 20px; display: flex; position: relative; background: linear-gradient(#8a8a8a, #9a9a9a); flex: none; margin-top: 2px; }
.plans { width: 93px; height: 18px; }
</style>
